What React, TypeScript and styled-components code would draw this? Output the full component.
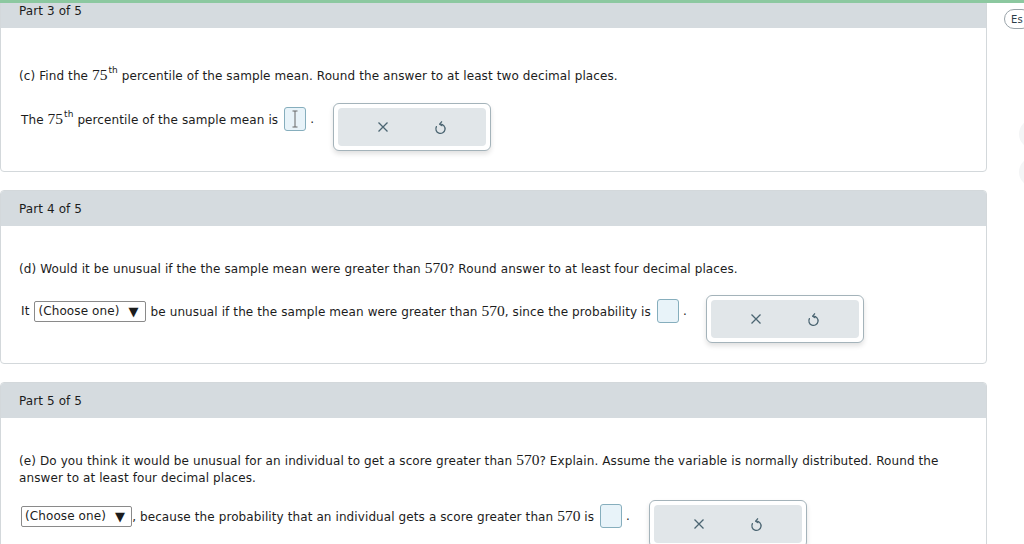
import styled, { createGlobalStyle } from "styled-components";
import { ReactNode } from "react";

const GlobalStyle = createGlobalStyle`
	html, body {
		margin: 0;
		padding: 0;
		background: #ffffff;
		overflow: hidden;
	}
	body {
		font-family: "DejaVu Sans", Verdana, sans-serif;
		font-size: 12px;
		letter-spacing: 0.1px;
		color: #1c1c1c;
	}
`;

const TopBar = styled.div`
	position: fixed;
	top: 0;
	left: 0;
	right: 0;
	height: 3px;
	background: #8cc8a0;
	z-index: 5;
`;

const Page = styled.div`
	display: flex;
	align-items: flex-start;
	width: 1024px;
	height: 544px;
	overflow: hidden;
`;

const Main = styled.main`
	width: 987px;
	flex-shrink: 0;
	display: flex;
	flex-direction: column;
	gap: 18px;
	margin-top: -8px;
`;

const Card = styled.section`
	border: 1px solid #d3d8db;
	border-radius: 4px;
	background: #fff;
	overflow: hidden;
`;

const CardHeader = styled.div`
	height: 35px;
	display: flex;
	align-items: center;
	padding-left: 18px;
	background: #d5dbdf;
	font-size: 12px;
`;

const CardBody = styled.div<{ $gap: number }>`
	display: flex;
	flex-direction: column;
	gap: ${(p) => p.$gap}px;
	padding: 33px 44px 36px 18px;
`;

const Prompt = styled.p<{ $raised?: boolean }>`
	margin: 0;
	line-height: 17px;
	padding-top: ${(p) => (p.$raised ? 5 : 0)}px;
`;

const Row = styled.div`
	display: flex;
	align-items: center;
	height: 32px;
	padding-left: 2px;
`;

const Num = styled.span`
	font-family: "Liberation Serif", "Times New Roman", serif;
	font-size: 15.5px;
	letter-spacing: 0;
`;

const Sup = styled.sup`
	font-size: 9px;
	vertical-align: 7px;
	line-height: 0;
	margin-left: 1px;
`;

const AnswerBox = styled.span`
	display: inline-flex;
	align-items: center;
	justify-content: center;
	width: 22px;
	height: 24px;
	margin: 0 4px 0 6px;
	background: #e8f3f9;
	border: 1px solid #86aebd;
	border-radius: 3px;
	box-sizing: border-box;
`;

const Select = styled.span<{ $lead?: boolean }>`
	display: inline-flex;
	align-items: center;
	gap: 9px;
	height: 21px;
	padding: 0 6px 0 3px;
	border: 1px solid #8a8a8a;
	border-radius: 2px;
	box-sizing: border-box;
	margin: 0 ${(p) => (p.$lead ? 0 : 5)}px 0 ${(p) => (p.$lead ? 0 : 5)}px;
	font-size: 12px;
	color: #1c1c1c;
`;

const Caret = styled.span`
	font-size: 13px;
	line-height: 1;
`;

const ToolFrame = styled.div`
	margin-left: 19px;
	margin-bottom: -16px;
	padding: 4px;
	border: 1px solid #a4b3ba;
	border-radius: 6px;
	background: #fff;
	box-shadow: 0 3px 5px rgba(0, 0, 0, 0.12);
`;

const ToolInner = styled.div`
	width: 148px;
	height: 38px;
	display: flex;
	align-items: center;
	justify-content: space-around;
	padding: 0 16px;
	box-sizing: border-box;
	background: #e1e6e9;
	border-radius: 4px;
	color: #4b6572;
`;

const Rail = styled.aside`
	flex: 1;
	display: flex;
	flex-direction: column;
	align-items: flex-start;
	padding: 9px 0 0 17px;
`;

const LangPill = styled.div`
	height: 18px;
	padding: 0 8px 0 6px;
	display: flex;
	align-items: center;
	border: 1px solid #9aa4aa;
	border-radius: 10px;
	font-family: "DejaVu Sans", sans-serif;
	font-size: 10px;
	color: #2b3d47;
	background: #fff;
`;

const Ghost = styled.div<{ $top: number }>`
	margin-top: ${(p) => p.$top}px;
	margin-left: 15px;
	width: 30px;
	height: 30px;
	border-radius: 50%;
	background: #f4f5f6;
`;

const CloseIcon = () => (
	<svg width="12" height="12" viewBox="0 0 12 12" fill="none" stroke="currentColor" strokeWidth="1.3">
		<path d="M1.5 1.5 L10.5 10.5 M10.5 1.5 L1.5 10.5" />
	</svg>
);

const UndoIcon = () => (
	<svg width="13" height="15" viewBox="0 0 13 15" fill="none" stroke="currentColor" strokeWidth="1.3" strokeLinecap="round" strokeLinejoin="round">
		<path d="M6.5 4.2 A4.6 4.6 0 1 1 2.4 6.6" />
		<path d="M7.6 1.8 L5.6 4.2 L8 5.6" />
	</svg>
);

const CursorIcon = () => (
	<svg width="8" height="18" viewBox="0 0 8 18" fill="none" stroke="#666" strokeWidth="1">
		<path d="M1.5 1 H6.5 M4 1 V17 M1.5 17 H6.5" />
	</svg>
);

function Tools() {
	return (
		<ToolFrame>
			<ToolInner>
				<CloseIcon />
				<UndoIcon />
			</ToolInner>
		</ToolFrame>
	);
}

function Part({ title, gap = 17, children }: { title: string; gap?: number; children: ReactNode }) {
	return (
		<Card>
			<CardHeader>{title}</CardHeader>
			<CardBody $gap={gap}>{children}</CardBody>
		</Card>
	);
}

const Choose = ({ lead }: { lead?: boolean }) => (
	<Select $lead={lead}>
		(Choose one) <Caret>▼</Caret>
	</Select>
);

export default function App() {
	return (
		<>
			<GlobalStyle />
			<TopBar />
			<Page>
				<Main>
					<Part title="Part 3 of 5" gap={18}>
						<Prompt $raised>
							(c) Find the <Num>75</Num>
							<Sup>th</Sup> percentile of the sample mean. Round the answer to at least two decimal places.
						</Prompt>
						<Row>
							<span>
								The <Num>75</Num>
								<Sup>th</Sup> percentile of the sample mean is
							</span>
							<AnswerBox>
								<CursorIcon />
							</AnswerBox>
							<span>.</span>
							<Tools />
						</Row>
					</Part>
					<Part title="Part 4 of 5">
						<Prompt>
							(d) Would it be unusual if the the sample mean were greater than <Num>570</Num>? Round answer to at least four decimal places.
						</Prompt>
						<Row>
							<span>It</span>
							<Choose />
							<span>
								be unusual if the the sample mean were greater than <Num>570</Num>, since the probability is
							</span>
							<AnswerBox />
							<span>.</span>
							<Tools />
						</Row>
					</Part>
					<Part title="Part 5 of 5" gap={13}>
						<Prompt>
							(e) Do you think it would be unusual for an individual to get a score greater than <Num>570</Num>? Explain. Assume the variable is normally distributed. Round the answer to at least four decimal places.
						</Prompt>
						<Row>
							<Choose lead />
							<span>
								, because the probability that an individual gets a score greater than <Num>570</Num> is
							</span>
							<AnswerBox />
							<span>.</span>
							<Tools />
						</Row>
					</Part>
				</Main>
				<Rail>
					<LangPill>Es</LangPill>
					<Ghost $top={90} />
					<Ghost $top={8} />
				</Rail>
			</Page>
		</>
	);
}
